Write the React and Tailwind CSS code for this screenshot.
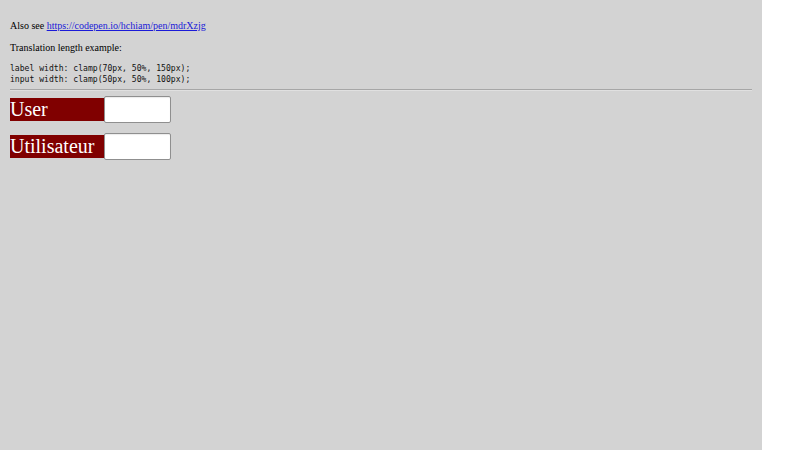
// App.jsx — translation length demo

function Row({ label }) {
  return (
    <div className="flex items-center">
      <label className="w-[94px] h-[23px] bg-[#800000] text-white text-[20px] leading-[23px] whitespace-nowrap">
        {label}
      </label>
      <input
        type="text"
        className="w-[67px] h-[27px] bg-white border border-[#8f8f8f] rounded-[2px] shadow-[inset_0_1px_1px_rgba(0,0,0,0.08)]"
      />
    </div>
  )
}

export default function App() {
  return (
    <div className="w-[762px] min-h-screen bg-[#d3d3d3] px-[10px] pt-[20px] text-black text-[10px] leading-[11.5px] font-['Liberation_Serif',_'Times_New_Roman',_serif]">
      <p>
        Also see{' '}
        <a href="#" className="text-[#1a1ad8] underline">
          https://codepen.io/hchiam/pen/mdrXzjg
        </a>
      </p>
      <p className="mt-[10px]">Translation length example:</p>

      <pre className="mt-[10px] text-[8.1px] leading-[10.6px] text-[#111] font-['DejaVu_Sans_Mono',_monospace]">
        {'label width: clamp(70px, 50%, 150px);\ninput width: clamp(50px, 50%, 100px);'}
      </pre>

      <hr className="my-[5px] h-0 border-t border-t-[#a6a6a6] border-b border-b-[#e0e0e0]" />

      <div className="flex flex-col gap-[10px]">
        <Row label="User" />
        <Row label="Utilisateur" />
      </div>
    </div>
  )
}
